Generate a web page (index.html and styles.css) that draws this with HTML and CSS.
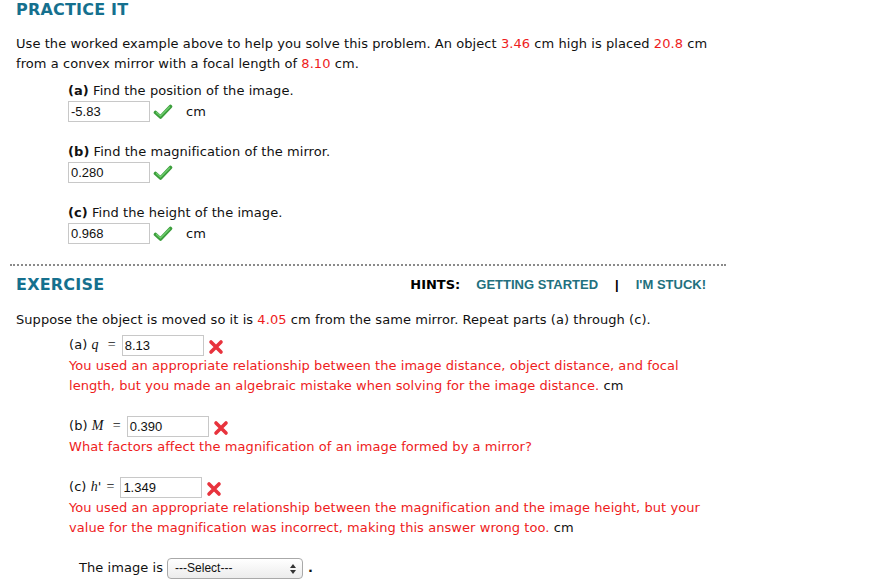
FILE: index.html
```html
<!DOCTYPE html>
<html>
<head>
<meta charset="utf-8">
<link rel="stylesheet" href="styles.css">
</head>
<body>
<div class="page">
  <h2 class="heading">PRACTICE IT</h2>
  <p class="intro">Use the worked example above to help you solve this problem. An object <span class="red">3.46</span> cm high is placed <span class="red">20.8</span> cm from a convex mirror with a focal length of <span class="red">8.10</span> cm.</p>

  <div class="part">
    <div class="label"><b>(a)</b> Find the position of the image.</div>
    <div class="answer">
      <span class="box">-5.83</span>
      <svg class="check" width="20" height="16" viewBox="0 0 20 16"><path d="M2.5 8.5 L7.5 13 L17.5 2.5" fill="none" stroke="#3c9e3c" stroke-width="3.6" stroke-linecap="round" stroke-linejoin="round"/><path d="M3.5 8.5 L7.5 12 L16.5 3" fill="none" stroke="#6fcf6f" stroke-width="1.2" stroke-linecap="round" stroke-linejoin="round"/></svg>
      <span class="unit">cm</span>
    </div>
  </div>

  <div class="part">
    <div class="label"><b>(b)</b> Find the magnification of the mirror.</div>
    <div class="answer">
      <span class="box">0.280</span>
      <svg class="check" width="20" height="16" viewBox="0 0 20 16"><path d="M2.5 8.5 L7.5 13 L17.5 2.5" fill="none" stroke="#3c9e3c" stroke-width="3.6" stroke-linecap="round" stroke-linejoin="round"/><path d="M3.5 8.5 L7.5 12 L16.5 3" fill="none" stroke="#6fcf6f" stroke-width="1.2" stroke-linecap="round" stroke-linejoin="round"/></svg>
    </div>
  </div>

  <div class="part">
    <div class="label"><b>(c)</b> Find the height of the image.</div>
    <div class="answer">
      <span class="box">0.968</span>
      <svg class="check" width="20" height="16" viewBox="0 0 20 16"><path d="M2.5 8.5 L7.5 13 L17.5 2.5" fill="none" stroke="#3c9e3c" stroke-width="3.6" stroke-linecap="round" stroke-linejoin="round"/><path d="M3.5 8.5 L7.5 12 L16.5 3" fill="none" stroke="#6fcf6f" stroke-width="1.2" stroke-linecap="round" stroke-linejoin="round"/></svg>
      <span class="unit">cm</span>
    </div>
  </div>

  <div class="rule"></div>

  <div class="exhead">
    <h2 class="heading">EXERCISE</h2>
    <div class="hints">
      <span class="hints-label">HINTS:</span>
      <span class="hint-link">GETTING STARTED</span>
      <span class="sep">|</span>
      <span class="hint-link">I'M STUCK!</span>
    </div>
  </div>

  <p class="suppose">Suppose the object is moved so it is <span class="red">4.05</span> cm from the same mirror. Repeat parts (a) through (c).</p>

  <div class="ex">
    <div class="exrow">
      <span>(a) <i class="math">q</i> <span class="eq">=</span></span>
      <span class="box">8.13</span>
      <svg class="cross" width="16" height="16" viewBox="0 0 16 16"><path d="M3 3 L13 13 M13 3 L3 13" stroke="#e8333d" stroke-width="3.6" stroke-linecap="round"/></svg>
    </div>
    <div class="feedback">You used an appropriate relationship between the image distance, object distance, and focal length, but you made an algebraic mistake when solving for the image distance. <span class="black">cm</span></div>
  </div>

  <div class="ex">
    <div class="exrow">
      <span>(b) <i class="math">M</i> <span class="eq">=</span></span>
      <span class="box">0.390</span>
      <svg class="cross" width="16" height="16" viewBox="0 0 16 16"><path d="M3 3 L13 13 M13 3 L3 13" stroke="#e8333d" stroke-width="3.6" stroke-linecap="round"/></svg>
    </div>
    <div class="feedback">What factors affect the magnification of an image formed by a mirror?</div>
  </div>

  <div class="ex">
    <div class="exrow">
      <span>(c) <i class="math">h</i>'<span class="eq">=</span></span>
      <span class="box">1.349</span>
      <svg class="cross" width="16" height="16" viewBox="0 0 16 16"><path d="M3 3 L13 13 M13 3 L3 13" stroke="#e8333d" stroke-width="3.6" stroke-linecap="round"/></svg>
    </div>
    <div class="feedback">You used an appropriate relationship between the magnification and the image height, but your value for the magnification was incorrect, making this answer wrong too. <span class="black">cm</span></div>
  </div>

  <div class="selectrow">
    <span>The image is</span>
    <span class="select">---Select---
      <svg class="arrows" width="8" height="12" viewBox="0 0 8 12"><path d="M4 1 L7 5 L1 5 Z M4 11 L7 7 L1 7 Z" fill="#333"/></svg>
    </span>
    <span class="dot">.</span>
  </div>
</div>
</body>
</html>
```

FILE: styles.css
```css
html, body {
  margin: 0;
  padding: 0;
  background: #fff;
}
body {
  font-family: "DejaVu Sans", Verdana, sans-serif;
  font-size: 13px;
  line-height: 20px;
  letter-spacing: 0.065px;
  color: #111;
}
.page {
  padding: 0 0 0 16px;
  width: 712px;
}
.heading {
  margin: 0;
  font-size: 16px;
  line-height: 20px;
  font-weight: bold;
  color: #15708e;
  letter-spacing: 0.2px;
}
.intro {
  margin: 14px 0 0 0;
}
.red {
  color: #ee1c1c;
}
.black {
  color: #111;
}
.part {
  margin: 7px 0 20px 52px;
}
.part + .part {
  margin-top: 0;
}
.label {
  height: 20px;
}
.answer {
  display: flex;
  align-items: center;
  height: 21px;
}
.box {
  display: inline-block;
  box-sizing: border-box;
  width: 82px;
  height: 21px;
  border: 1px solid #c8c8c8;
  padding: 0 2px;
  font-family: "Liberation Sans", Arial, sans-serif;
  font-size: 13px;
  line-height: 19px;
  letter-spacing: 0;
  color: #111;
}
.check {
  margin-left: 3px;
}
.unit {
  margin-left: 13px;
}
.rule {
  margin: 18px 0 0 -6px;
  width: 716px;
  border-top: 2px dotted #8a8a8a;
}
.exhead {
  display: flex;
  align-items: center;
  margin-top: 9px;
  height: 20px;
}
.hints {
  margin-left: auto;
  display: flex;
  align-items: center;
  font-family: "Liberation Sans", Arial, sans-serif;
  font-weight: bold;
  font-size: 13px;
  letter-spacing: 0;
  margin-right: 22px;
}
.hints-label {
  color: #000;
  font-family: "DejaVu Sans", Verdana, sans-serif;
  font-size: 13px;
  margin-right: 16px;
}
.hint-link {
  color: #22707e;
}
.sep {
  color: #000;
  margin: 0 17px;
}
.suppose {
  margin: 15px 0 0 0;
}
.ex {
  margin: 4px 0 19px 53px;
}
.ex + .ex {
  margin-top: 0;
}
.exrow {
  display: flex;
  align-items: center;
  height: 22px;
}
.math {
  font-family: "Liberation Serif", "Times New Roman", serif;
  font-size: 14px;
}
.eq {
  font-family: "Liberation Serif", "Times New Roman", serif;
  font-size: 14px;
  margin: 0 3px 0 5px;
}
.exrow .box {
  margin-left: 3px;
}
.cross {
  margin-left: 4px;
  margin-top: 4px;
}
.feedback {
  color: #ee1c1c;
}
.selectrow {
  display: flex;
  align-items: center;
  margin: 0 0 0 63px;
  height: 22px;
}
.select {
  position: relative;
  display: inline-block;
  box-sizing: border-box;
  width: 136px;
  height: 21px;
  margin-left: 4px;
  border: 1px solid #a9a9a9;
  border-radius: 4px;
  background: linear-gradient(#ffffff, #ececec);
  font-family: "Liberation Sans", Arial, sans-serif;
  font-size: 12px;
  line-height: 19px;
  letter-spacing: 0;
  padding-left: 7px;
  color: #111;
}
.arrows {
  position: absolute;
  right: 5px;
  top: 4px;
}
.dot {
  margin-left: 5px;
  font-weight: bold;
}
```
